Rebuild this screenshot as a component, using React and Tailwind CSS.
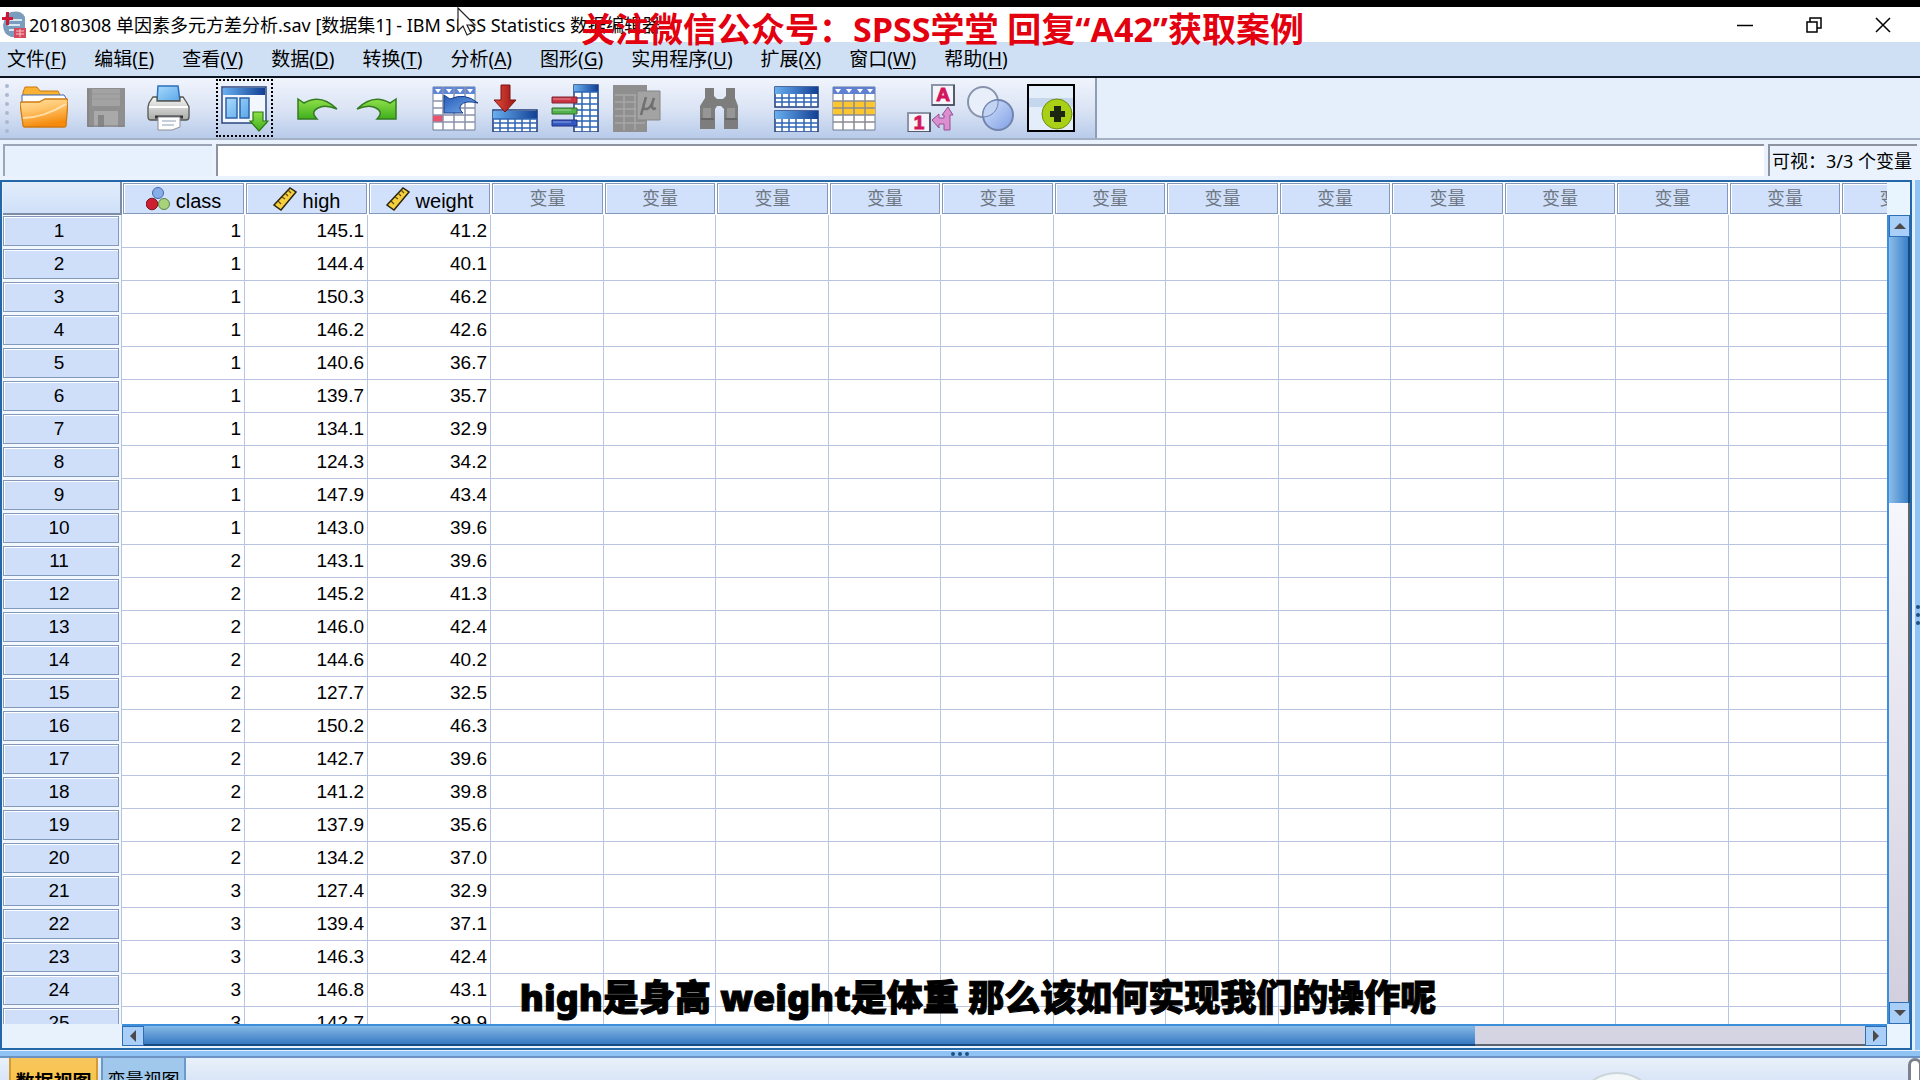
import React from 'react';
import clsx from 'clsx';

const menus = [
  ['文件', 'F'], ['编辑', 'E'], ['查看', 'V'], ['数据', 'D'], ['转换', 'T'], ['分析', 'A'],
  ['图形', 'G'], ['实用程序', 'U'], ['扩展', 'X'], ['窗口', 'W'], ['帮助', 'H'],
];

const rows = [
  [1, '145.1', '41.2'], [1, '144.4', '40.1'], [1, '150.3', '46.2'], [1, '146.2', '42.6'], [1, '140.6', '36.7'],
  [1, '139.7', '35.7'], [1, '134.1', '32.9'], [1, '124.3', '34.2'], [1, '147.9', '43.4'], [1, '143.0', '39.6'],
  [2, '143.1', '39.6'], [2, '145.2', '41.3'], [2, '146.0', '42.4'], [2, '144.6', '40.2'], [2, '127.7', '32.5'],
  [2, '150.2', '46.3'], [2, '142.7', '39.6'], [2, '141.2', '39.8'], [2, '137.9', '35.6'], [2, '134.2', '37.0'],
  [3, '127.4', '32.9'], [3, '139.4', '37.1'], [3, '146.3', '42.4'], [3, '146.8', '43.1'], [3, '142.7', '39.9'],
];

const emptyCols = Array.from({ length: 13 }, (_, i) => i);

const Lines = ({ xs = [], ys = [], x1, x2, y1, y2, stroke, width = 1.5 }) => (
  <path
    d={xs.map((x) => `M${x} ${y1}V${y2}`).join('') + ys.map((y) => `M${x1} ${y}H${x2}`).join('')}
    stroke={stroke}
    strokeWidth={width}
    fill="none"
  />
);

const Defs = () => (
  <svg width="0" height="0" className="absolute" aria-hidden="true">
    <defs>
      <linearGradient id="folder" x1="0" y1="0" x2="0.3" y2="1">
        <stop offset="0" stopColor="#ffe2a4" />
        <stop offset="0.45" stopColor="#ffc46a" />
        <stop offset="1" stopColor="#f58a0c" />
      </linearGradient>
      <linearGradient id="navy" x1="0" y1="0" x2="1" y2="0">
        <stop offset="0" stopColor="#69aff0" />
        <stop offset="1" stopColor="#123f94" />
      </linearGradient>
      <linearGradient id="pane" x1="0" y1="0" x2="1" y2="1">
        <stop offset="0" stopColor="#a9dafb" />
        <stop offset="1" stopColor="#5aa7ea" />
      </linearGradient>
      <linearGradient id="green" x1="0" y1="0" x2="0" y2="1">
        <stop offset="0" stopColor="#8fe04a" />
        <stop offset="1" stopColor="#3fae1c" />
      </linearGradient>
      <linearGradient id="red" x1="0" y1="0" x2="1" y2="0">
        <stop offset="0" stopColor="#e04a3a" />
        <stop offset="1" stopColor="#9c1515" />
      </linearGradient>
      <linearGradient id="blue" x1="0" y1="0" x2="1" y2="1">
        <stop offset="0" stopColor="#2458b8" />
        <stop offset="1" stopColor="#79b0ea" />
      </linearGradient>
      <linearGradient id="printer" x1="0" y1="0" x2="0" y2="1">
        <stop offset="0" stopColor="#f5f5f3" />
        <stop offset="1" stopColor="#a9aba8" />
      </linearGradient>
      <linearGradient id="venn" x1="0" y1="0" x2="1" y2="1">
        <stop offset="0" stopColor="#d6e4fb" />
        <stop offset="1" stopColor="#7f9fe6" />
      </linearGradient>
    </defs>
  </svg>
);

const icons = {
  open: (
    <>
      <path d="M3 40V8l2-5h12l3 4h18l2 4v20z" fill="#f9b233" stroke="#c9780c" />
      <path d="M2 11h42l2 3v7H2z" fill="#fff" stroke="#3d66b0" />
      <path d="M0 20q0-2 2-2h17l6-3h21q2 0 2 2l-2 25q0 1-2 1H5q-2 0-2-2z" fill="url(#folder)" stroke="#cf7a12" strokeWidth="1.3" />
      <path d="M3 34q20 0 43-14" stroke="#fff3d6" strokeWidth="2" opacity="0.7" fill="none" />
    </>
  ),
  save: (
    <>
      <path d="M5 4h38v39H5z" fill="#8f8f8f" />
      <path d="M10 5h28v17H10z" fill="#a3a3a3" />
      <path d="M10 10h28M10 15h28" stroke="#969696" />
      <path d="M12 27h24v16H12z" fill="#a9a9a9" />
      <path d="M16 31h6v12h-6z" fill="#868686" />
      <path d="M6 5v37h36" stroke="#7f7f7f" fill="none" />
    </>
  ),
  print: (
    <>
      <path d="M13 17L14 2h20l2 15z" fill="url(#pane)" stroke="#2c6fbd" strokeWidth="1.5" />
      <path d="M5 19l4-6h4v4h23v-4h3l4 6 2 4v10q0 3-3 3H7q-3 0-3-3V23z" fill="url(#printer)" stroke="#55584f" strokeWidth="1.3" />
      <path d="M5 23h39" stroke="#fff" strokeWidth="2" />
      <path d="M11 33h28" stroke="#333" strokeWidth="3" />
      <path d="M14 33h22v10l-8 3H14z" fill="#fdfdfd" stroke="#8b8f98" />
      <path d="M18 37h14M18 41h12" stroke="#8fa0b5" />
    </>
  ),
  recall: (
    <>
      <path d="M1 3h44v36H1z" fill="#f2f7fd" stroke="#2b4680" strokeWidth="1.5" />
      <path d="M2 4h42v7H2z" fill="url(#navy)" />
      <path d="M5 14h11v20H5zM19 14h9v20h-9z" fill="url(#pane)" stroke="#2e63a8" strokeWidth="1.5" />
      <path d="M32 28h10v9h5L38 47 29 37h3z" fill="url(#green)" stroke="#2c7a14" strokeWidth="1.2" />
    </>
  ),
  undo: <path d="M5 15l6 4q17-10 33 6-12-5-19-1-8 4-1 11H5z" fill="url(#green)" stroke="#347b22" strokeWidth="1.5" />,
  redo: <path d="M43 15l-6 4Q20 9 4 25q12-5 19-1 8 4 1 11h19z" fill="url(#green)" stroke="#347b22" strokeWidth="1.5" />,
  gotoCase: (
    <>
      <path d="M2 3h42v43H2z" fill="#fff" stroke="#6d7a96" />
      <path d="M2 3h42v7H2z" fill="#5f86d6" />
      <path d="M4 5h6l-3 4zM15 5h6l-3 4zM26 5h6l-3 4zM36 5h6l-3 4z" fill="#fff" />
      <path d="M2 31h10v7H2z" fill="#e8546c" />
      <Lines xs={[12, 23, 34]} ys={[17, 24, 31, 38]} x1={2} x2={44} y1={3} y2={46} stroke="#8b93ab" />
      <path d="M13 11l6 4q15-7 28 4-13-3-17 2-3 4 2 8H13z" fill="url(#blue)" stroke="#173f8c" />
    </>
  ),
  gotoVar: (
    <>
      <path d="M2 26h44v22H2z" fill="#fff" stroke="#1c3d7c" strokeWidth="1.5" />
      <path d="M2 27h44v8H2z" fill="url(#navy)" />
      <Lines xs={[9, 17, 24, 31, 39]} ys={[35, 39, 44]} x1={2} x2={46} y1={35} y2={48} stroke="#2c66b4" />
      <path d="M10 1h9v15h6L14 28 3 16h7z" fill="url(#red)" stroke="#7d1010" />
    </>
  ),
  variables: (
    <>
      <path d="M23 1h24v47H23z" fill="#fff" stroke="#1c3d7c" strokeWidth="1.5" />
      <path d="M23 1h24v7H23z" fill="url(#navy)" />
      <Lines xs={[31, 39]} ys={[8, 14, 20, 26, 32, 37, 43]} x1={23} x2={47} y1={8} y2={48} stroke="#2c66b4" />
      <path d="M1 13h25v6H1z" fill="#cc3444" stroke="#7c2430" />
      <path d="M1 24h25v6H1z" fill="#52b24a" stroke="#2c6c2a" />
      <path d="M1 36h25v6H1z" fill="#3458c4" stroke="#1c2f7c" />
      <path d="M2 15h18M2 26h18M2 38h18" stroke="#fff" opacity="0.45" />
    </>
  ),
  stats: (
    <>
      <path d="M0 1h34v47H0z" fill="#8f8f8f" />
      <Lines xs={[11, 22]} ys={[11, 18, 25, 32, 39]} x1={2} x2={32} y1={11} y2={46} stroke="#a8a8a8" />
      <path d="M24 7h23v29H24z" fill="#a3a3a3" stroke="#858585" />
      <path d="M33 13l-5 18M32 17q-4 9 2 8 4-1 7-11-4 10 0 11l2-1" fill="none" stroke="#707070" strokeWidth="2.5" />
    </>
  ),
  find: (
    <g fill="#7d7d7d">
      <path d="M10 4h9v8l3 3h6l3-3V4h9v10l3 8v23H29V25l-3-3h-4l-2 3v20H5V22l5-8z" />
      <path d="M8 24h8v10H8zM32 24h8v10h-8z" fill="#969696" />
      <path d="M6 35h13M30 35h12" stroke="#666" strokeWidth="2" />
    </g>
  ),
  split: (
    <>
      <path d="M2 3h43v20H2zM2 27h43v21H2z" fill="#fff" stroke="#1c3d7c" strokeWidth="1.5" />
      <path d="M2 3h43v7H2zM2 27h43v8H2z" fill="url(#navy)" />
      <Lines xs={[9, 16, 23, 31, 38]} ys={[14, 18, 39, 43]} x1={2} x2={45} y1={10} y2={23} stroke="#2c66b4" />
      <Lines xs={[9, 16, 23, 31, 38]} y1={35} y2={48} stroke="#2c66b4" />
    </>
  ),
  select: (
    <>
      <path d="M2 3h42v43H2z" fill="#fff" stroke="#6d7a96" />
      <path d="M2 3h42v7H2z" fill="#5f7fd0" />
      <path d="M4 5h6l-3 4zM15 5h6l-3 4zM26 5h6l-3 4zM36 5h6l-3 4z" fill="#fff" />
      <path d="M2 17h42v14H2z" fill="#fcc72e" />
      <Lines xs={[12, 23, 34]} ys={[17, 24, 31, 38]} x1={2} x2={44} y1={10} y2={46} stroke="#8b8b93" />
    </>
  ),
  labels: (
    <>
      <path d="M25 1h22v20H25zM1 29h22v19H1z" fill="#f4f4fa" stroke="#8c95a8" strokeWidth="2" />
      <path d="M47 1v20H25M23 29v19H1" stroke="#41485a" strokeWidth="1.5" fill="none" />
      <text x="36" y="17" textAnchor="middle" fontSize="19" fontWeight="bold" fill="#d4145a" stroke="#d4145a" fontFamily="Liberation Sans, sans-serif">A</text>
      <text x="12" y="45" textAnchor="middle" fontSize="19" fontWeight="bold" fill="#d4145a" stroke="#d4145a" fontFamily="Liberation Sans, sans-serif">1</text>
      <path d="M41 23l5 8h-3v15h-6v-6h-5v4l-7-8 7-6v4h5v-3h-2z" fill="#dc8fd0" stroke="#94508f" />
    </>
  ),
  sets: (
    <>
      <circle cx="16" cy="18" r="15" fill="#e8effa" stroke="#8794ac" strokeWidth="2" />
      <circle cx="31" cy="31" r="15" fill="url(#venn)" stroke="#7285ad" strokeWidth="2" />
      <path d="M16 33a15 15 0 0 1 15-17 15 15 0 0 1-15 17z" fill="#c2d4f2" stroke="#6c82b2" />
    </>
  ),
  custom: (
    <>
      <path d="M1 1h46v46H1z" fill="#e4eefa" stroke="#000" strokeWidth="2" />
      <path d="M2 14h44v9H2z" fill="#c5d7ec" />
      <circle cx="30" cy="30" r="15" fill="#a9cf16" stroke="#6f8d10" />
      <path d="M27 22h7v5h4v6h-4v5h-7v-5h-4v-6h4z" fill="#1d2610" />
    </>
  ),
};

const tools = [
  ['open', '打开', ''],
  ['save', '保存', 'ml-[14px]'],
  ['print', '打印', 'ml-[14px]'],
  ['recall', '重新调用对话框', 'ml-6'],
  ['undo', '撤销', 'ml-5'],
  ['redo', '重做', 'ml-3'],
  ['gotoCase', '转到个案', 'ml-[30px]'],
  ['gotoVar', '转到变量', 'ml-3'],
  ['variables', '变量', 'ml-3'],
  ['stats', '运行描述统计', 'ml-[14px]'],
  ['find', '查找', 'ml-[34px]'],
  ['split', '拆分文件', 'ml-[30px]'],
  ['select', '选择个案', 'ml-[10px]'],
  ['labels', '值标签', 'ml-7'],
  ['sets', '使用变量集', 'ml-3'],
  ['custom', '定制工具栏', 'ml-3'],
];

const TitleBar = () => (
  <header className="flex h-[35px] shrink-0 items-center bg-white pl-px">
    <svg width="26" height="28" viewBox="0 0 26 28" className="mr-[2px]">
      <path d="M5 3q14-6 19 3v20H10q-8-3-8-12z" fill="#7b9dbd" />
      <path d="M9 9h12M7 14h12M8 19h8" stroke="#d8e6f2" strokeWidth="2" />
      <path d="M5 1h3v5h4v3H8v5H5V9H1V6h4z" fill="#cf1735" />
      <path d="M13 17h12v10H13z" fill="#d7495c" />
      <path d="M15 20h8M15 23h8M19 18v8" stroke="#f6c5cb" />
    </svg>
    <h1 className="flex-1 whitespace-nowrap text-[18px] leading-[26px]">
      20180308 单因素多元方差分析.sav [数据集1] - IBM SPSS Statistics 数据编辑器
    </h1>
    <div className="flex items-center gap-[53px] pr-[29px]">
      <button aria-label="最小化" className="h-4 w-4">
        <svg width="16" height="16"><path d="M0 8.5h16" stroke="#000" strokeWidth="1.5" /></svg>
      </button>
      <button aria-label="还原" className="h-4 w-4">
        <svg width="16" height="16" fill="none" stroke="#000" strokeWidth="1.5">
          <path d="M1 5h10v10H1zM4 5V1h11v10h-4" />
        </svg>
      </button>
      <button aria-label="关闭" className="h-4 w-4">
        <svg width="16" height="16"><path d="M1 1l14 14M15 1L1 15" stroke="#000" strokeWidth="1.5" /></svg>
      </button>
    </div>
  </header>
);

const MenuBar = () => (
  <nav className="flex h-9 shrink-0 items-center gap-7 border-b-2 border-[#0c1420] bg-[#cfe0f4] pl-[7px]">
    {menus.map(([label, key]) => (
      <button key={key} className="whitespace-nowrap text-[19px] leading-[26px]">
        {label}(<span className="underline underline-offset-2">{key}</span>)
      </button>
    ))}
  </nav>
);

const Toolbar = () => (
  <div className="flex h-[62px] shrink-0 border-b-2 border-[#a4b0c4] bg-[#e4effb]">
    <div className="flex items-center border-r-2 border-[#8e9cb4] bg-linear-to-b from-[#f0f4fc] via-[#dce5f5] to-[#b8cbea] pr-5">
      <div className="ml-[5px] mr-[11px] flex w-1 flex-col gap-[5px]">
        {[0, 1, 2, 3, 4, 5].map((i) => (
          <i key={i} className="size-1 rounded-full bg-[#aab8d0]" />
        ))}
      </div>
      {tools.map(([name, label, gap]) => (
        <button
          key={name}
          aria-label={label}
          className={clsx(
            'flex items-center justify-center',
            gap,
            name === 'recall' ? 'h-[58px] w-[57px] border-2 border-dotted border-black' : 'size-12',
          )}
        >
          <svg width="48" height="48" viewBox="0 0 48 48">{icons[name]}</svg>
        </button>
      ))}
    </div>
  </div>
);

const CellEditor = () => (
  <div className="flex h-10 shrink-0 gap-1 bg-[#eaf3fd] px-[3px] pb-1 pt-1">
    <div className="w-[209px] border-l-2 border-t-2 border-[#9aa6b8] bg-[#e6f1fd]" />
    <input aria-label="单元格编辑器" className="min-w-0 flex-1 border-l-2 border-t-2 border-[#8d949f] bg-white px-1 outline-none" />
    <div className="flex w-[149px] items-center whitespace-nowrap border-l-2 border-t-2 border-[#8d949f] pl-[2px] text-[18px] leading-[26px]">
      可视：3/3 个变量
    </div>
  </div>
);

const NominalIcon = () => (
  <svg width="24" height="24" viewBox="0 0 24 24">
    <circle cx="12" cy="6" r="5.5" fill="#86aee8" stroke="#4468ac" />
    <circle cx="6" cy="17" r="5.8" fill="#cc1f30" stroke="#7e1420" />
    <circle cx="18" cy="17" r="5.5" fill="#a8d27c" stroke="#5a8440" />
  </svg>
);

const ScaleIcon = () => (
  <svg width="24" height="24" viewBox="0 0 24 24">
    <path d="M1 18L17 1l6 4L8 23z" fill="#f6cf3c" stroke="#2a2410" strokeWidth="1.5" />
    <path d="M5 14l3 3M9 10l3 2M12 6l3 3M15 3l3 3" stroke="#5c4a10" strokeWidth="1.2" />
  </svg>
);

const HeadBox = ({ className, children }) => (
  <div className={clsx('flex h-[31px] items-center justify-center border border-[#8399bb] bg-[#d2e1fb] shadow-[inset_1px_1px_0_#fff]', className)}>
    {children}
  </div>
);

const DataGrid = () => (
  <table className="w-max table-fixed border-separate border-spacing-0 font-['Liberation_Sans','Noto_Sans_CJK_SC',sans-serif] text-[20px] leading-6">
    <colgroup>
      <col className="w-[119px]" />
      <col className="w-[123px]" />
      <col className="w-[123px]" />
      <col className="w-[123px]" />
      {emptyCols.map((i) => (
        <col key={i} className={i % 2 ? 'w-[112px]' : 'w-[113px]'} />
      ))}
    </colgroup>
    <thead>
      <tr>
        <td className="h-[33px] p-0">
          <div className="h-[33px] border-b-2 border-r-2 border-[#7d8da6] bg-linear-to-b from-[#e2edfb] to-[#cfe0f8]" />
        </td>
        <th scope="col" className="p-0 pl-px pr-px font-normal"><HeadBox className="gap-[6px]"><NominalIcon /><span className="pt-1">class</span></HeadBox></th>
        <th scope="col" className="p-0 pl-px pr-px font-normal"><HeadBox className="gap-[6px]"><ScaleIcon /><span className="pt-1">high</span></HeadBox></th>
        <th scope="col" className="p-0 pl-px pr-px font-normal"><HeadBox className="gap-[6px]"><ScaleIcon /><span className="pt-1">weight</span></HeadBox></th>
        {emptyCols.map((i) => (
          <th key={i} scope="col" className="p-0 pl-px pr-px font-normal">
            <HeadBox className="text-[18px] text-[#6d7683]">变量</HeadBox>
          </th>
        ))}
      </tr>
    </thead>
    <tbody className="text-[19px]">
      {rows.map((row, r) => (
        <tr key={r} className="h-[33px]">
          <th scope="row" className="border-r border-[#b7c4e0] bg-[#f3f8fe] p-0 pr-[2px] font-normal">
            <div className="mb-px flex h-[30px] items-center justify-center border border-[#8399bb] bg-[#cfdffa] pr-1 shadow-[inset_1px_1px_0_#fff]">
              {r + 1}
            </div>
          </th>
          {row.map((value, c) => (
            <td key={c} className="border-b border-r border-[#b9c4e2] p-0 pr-[3px] pb-px text-right">{value}</td>
          ))}
          {emptyCols.map((i) => (
            <td key={i} className="border-b border-r border-[#b9c4e2] p-0" />
          ))}
        </tr>
      ))}
    </tbody>
  </table>
);

const ScrollButton = ({ label, path, className }) => (
  <button aria-label={label} className={clsx('flex shrink-0 items-center justify-center border border-[#2f6fb5] bg-[#a9cff8]', className)}>
    <svg width="14" height="14" viewBox="0 0 14 14"><path d={path} fill="#4d4a4c" /></svg>
  </button>
);

const VerticalScroll = () => (
  <div className="flex w-[23px] shrink-0 flex-col">
    <div className="h-[33px] shrink-0 bg-[#e9f5fe]" />
    <div className="flex flex-1 flex-col border-l-2 border-[#3d8fdc]">
      <ScrollButton label="向上滚动" path="M7 4l6 6H1z" className="h-[22px]" />
      <div className="grow-[266] basis-0 border-r-2 border-[#174a80] bg-linear-to-r from-[#8cbce8] to-[#3a80c8]" />
      <div className="grow-[499] basis-0 border-r-2 border-[#5c6670] bg-linear-to-b from-[#f6f6fd] to-[#d2d0de]" />
      <ScrollButton label="向下滚动" path="M7 10L1 4h12z" className="h-[22px]" />
    </div>
    <div className="h-6 shrink-0 bg-[#eaf4fe]" />
  </div>
);

const HorizontalScroll = () => (
  <div className="flex h-6 shrink-0 items-start bg-[#e8f2fd]">
    <div className="w-[119px] shrink-0" />
    <div className="flex h-[22px] flex-1 border-t-2 border-[#3d8fdc]">
      <ScrollButton label="向左滚动" path="M4 7l6-6v12z" className="w-[22px]" />
      <div className="grow-[1332] basis-0 border-b-2 border-[#174a80] bg-linear-to-b from-[#86b9e6] to-[#3579c2]" />
      <div className="grow-[390] basis-0 border-b-2 border-[#5c6670] bg-[#d5d4e2]" />
      <ScrollButton label="向右滚动" path="M10 7L4 1v12z" className="w-[22px]" />
    </div>
  </div>
);

const ViewTabs = () => (
  <div className="relative flex h-[22px] shrink-0 items-start gap-[3px] overflow-hidden bg-linear-to-b from-[#e8f1fb] to-[#dae5f7] pl-[9px]">
    <button className="flex h-10 w-[89px] justify-center border-x-2 border-[#d29b34] bg-linear-to-b from-[#f7c65c] to-[#fbc53a] pt-[11px] text-[19px] font-bold leading-[26px]">数据视图</button>
    <button className="flex h-10 w-[85px] justify-center border-x-2 border-[#6c9ac8] bg-[#9fc8ec] pt-[9px] text-[18px] leading-[26px]">变量视图</button>
    <div className="absolute left-[82%] top-[14px] h-[86px] w-[86px] rounded-full border-2 border-[#cbd5dc] bg-[#f3f7f8]" />
    <div className="absolute right-[-2px] top-0 h-16 w-[14px] rounded-t-lg border-[3px] border-[#7b818d] bg-white" />
  </div>
);

const App = () => {
  return (
    <div className="relative flex h-screen flex-col overflow-hidden bg-[#e6f1fd] font-['Noto_Sans','Noto_Sans_CJK_SC',sans-serif] text-black">
      <Defs />
      <div className="h-[7px] shrink-0 bg-black" />
      <TitleBar />
      <MenuBar />
      <Toolbar />
      <CellEditor />

      <div className="flex min-h-0 flex-1">
        <main className="flex min-w-0 flex-1 flex-col border-2 border-[#2467a8] bg-[#eaf4fe] pl-px">
          <div className="flex min-h-0 flex-1">
            <div className="flex min-w-0 flex-1 flex-col">
              <div className="min-h-0 flex-1 overflow-hidden bg-white">
                <DataGrid />
              </div>
              <HorizontalScroll />
            </div>
            <VerticalScroll />
          </div>
        </main>
        <div className="ml-[3px] flex w-[5px] shrink-0 flex-col items-center justify-center gap-1 bg-[#8fc3f3]">
          <i className="size-1 rounded-full bg-[#1f4f86]" />
          <i className="size-1 rounded-full bg-[#1f4f86]" />
          <i className="size-1 rounded-full bg-[#1f4f86]" />
        </div>
      </div>
      <div className="mt-px flex h-[7px] shrink-0 items-center justify-center gap-[3px] border-b-2 border-[#6b92c2] bg-[#8fc3f3]">
        <i className="size-1 rounded-full bg-[#1f4f86]" />
        <i className="size-1 rounded-full bg-[#1f4f86]" />
        <i className="size-1 rounded-full bg-[#1f4f86]" />
      </div>
      <ViewTabs />

      {/* video overlays */}
      <p className="absolute left-[581px] top-1 whitespace-nowrap font-['Open_Sans','Noto_Sans_CJK_SC',sans-serif] text-[34px] font-bold leading-[50px] text-[#e3000f]">
        关注微信公众号：SPSS学堂 回复“A42”获取案例
      </p>
      <p className="absolute inset-x-0 bottom-14 whitespace-nowrap pl-9 text-center text-[36px] font-black leading-[52px] [-webkit-text-stroke:1px_#000]">
        high是身高 weight是体重 那么该如何实现我们的操作呢
      </p>
      <svg className="absolute left-[457px] top-[7px]" width="20" height="30" viewBox="0 0 20 30">
        <path d="M1 1v23l5-5 4 9 4-2-4-8h8z" fill="#fff" stroke="#222" strokeWidth="1.2" />
      </svg>
    </div>
  );
};

export default App;
